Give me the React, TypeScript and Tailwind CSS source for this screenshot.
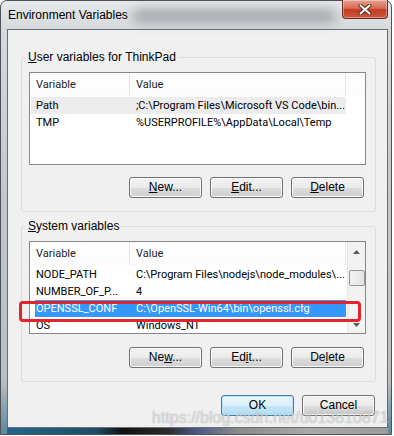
import React from 'react';

type Row = { name: string; value: string; state?: 'gray' | 'selected' };

const userRows: Row[] = [
  { name: 'Path', value: ';C:\\Program Files\\Microsoft VS Code\\bin...', state: 'gray' },
  { name: 'TMP', value: '%USERPROFILE%\\AppData\\Local\\Temp' },
];

const systemRows: Row[] = [
  { name: 'NODE_PATH', value: 'C:\\Program Files\\nodejs\\node_modules\\...' },
  { name: 'NUMBER_OF_P...', value: '4' },
  { name: 'OPENSSL_CONF', value: 'C:\\OpenSSL-Win64\\bin\\openssl.cfg', state: 'selected' },
  { name: 'OS', value: 'Windows_NT' },
];

function WinButton({ children, primary }: { children: React.ReactNode; primary?: boolean }) {
  return (
    <button
      type="button"
      className={
        primary
          ? 'h-[21px] w-[73px] rounded-[3px] border border-[#3c7fb1] bg-[linear-gradient(#eaf6fd_0%,#dcf0fb_50%,#c6e6f8_50%,#b4dcf3_100%)] text-[12px] leading-[15px] text-black shadow-[inset_0_0_0_1px_#b9e2f8]'
          : 'h-[21px] w-[73px] rounded-[3px] border border-[#707070] bg-[linear-gradient(#f2f2f2_0%,#ebebeb_50%,#dddddd_50%,#cfcfcf_100%)] text-[12px] leading-[15px] text-black shadow-[inset_0_0_0_1px_#fbfbfb]'
      }
    >
      {children}
    </button>
  );
}

function VarRow({ row }: { row: Row }) {
  if (row.state === 'selected') {
    return (
      <div className="flex h-[17px] items-center">
        <div className="ml-[5px] flex h-full w-[311px] items-center bg-[#3399ff] text-white">
          <span className="w-[95px] overflow-hidden whitespace-nowrap pl-[1px]">{row.name}</span>
          <span className="overflow-hidden whitespace-nowrap pl-[6px]">{row.value}</span>
        </div>
      </div>
    );
  }
  return (
    <div className="flex h-[17px] items-center">
      <div
        className={
          row.state === 'gray'
            ? 'ml-[1px] flex h-full w-[315px] items-center bg-[#ececec]'
            : 'ml-[1px] flex h-full w-[315px] items-center'
        }
      >
        <span className="w-[99px] overflow-hidden whitespace-nowrap pl-[5px]">{row.name}</span>
        <span className="overflow-hidden whitespace-nowrap pl-[6px]">{row.value}</span>
      </div>
    </div>
  );
}

function ScrollArrow({ down }: { down?: boolean }) {
  return (
    <svg width="7" height="4" viewBox="0 0 7 4" className={down ? 'rotate-180' : ''}>
      <path d="M0 4 L3.5 0 L7 4 Z" fill="#5a5a5a" />
    </svg>
  );
}

function VarList({ rows, scroll }: { rows: Row[]; scroll?: boolean }) {
  return (
    <div className="flex h-[93px] overflow-hidden border border-[#828790] bg-white font-['Roboto',Arial,sans-serif] text-[11px] leading-[14px]">
      <div className="flex min-w-0 flex-1 flex-col">
        <div className="flex h-[23px] shrink-0 bg-[linear-gradient(#ffffff,#fbfbfb)] text-[#1e1e1e]">
          <div className="w-[100px] border-r border-[#e3e5e8] pl-[6px] leading-[23px]">Variable</div>
          <div className="w-[216px] border-r border-[#e3e5e8] pl-[6px] leading-[23px]">Value</div>
          <div className="flex-1" />
        </div>
        <div className="pt-[1px]">
          {rows.map((r) => (
            <VarRow key={r.name} row={r} />
          ))}
        </div>
      </div>
      {scroll && (
        <div className="flex w-[18px] shrink-0 flex-col items-center border-l border-[#e6e6e6] bg-[#f2f2f2]">
          <div className="flex h-[19px] items-center justify-center">
            <ScrollArrow />
          </div>
          <div className="mt-[9px] h-[16px] w-[16px] rounded-[2px] border border-[#979797] bg-[linear-gradient(90deg,#f3f3f3,#e2e2e2)]" />
          <div className="flex-1" />
          <div className="flex h-[17px] items-center justify-center">
            <ScrollArrow down />
          </div>
        </div>
      )}
    </div>
  );
}

function Group({ label, children }: { label: React.ReactNode; children: React.ReactNode }) {
  return (
    <fieldset className="ml-[13px] mr-[11px] rounded-[3px] border border-[#d5dfe5] p-0">
      <legend className="ml-[4px] px-[2px] leading-[15px]">{label}</legend>
      <div className="pb-[13px] pl-[7px] pr-[9px] pt-[7px]">{children}</div>
    </fieldset>
  );
}

export default function App() {
  return (
    <div className="relative h-[436px] w-[394px] overflow-hidden bg-white font-['Liberation_Sans',Arial,sans-serif] text-[12px] leading-[15px] text-black">
      <div className="flex h-[435px] w-[392px] flex-col rounded-t-[7px] border border-[#4e5256] bg-[image:linear-gradient(180deg,#e6e9ec_0px,#d6dadd_28px,#c3c7cb_200px,#b9bec2_380px,#5f8aa0_430px)] pl-[6px] pr-[3px]">
        <div className="relative flex h-[28px] shrink-0 items-start justify-between">
          <div className="pointer-events-none absolute left-[125px] top-[8px] h-[14px] w-[205px] rounded-full bg-[#7d8186] opacity-60 blur-[6px]" />
          <span className="relative ml-[1px] mt-[7px] text-[12px] leading-[15px] text-black">Environment Variables</span>
          <div className="relative -mt-[1px] flex h-[19px] w-[46px] items-center justify-center rounded-b-[4px] border border-t-0 border-[#6b2a22] bg-[linear-gradient(#e7a28f_0%,#d76c55_45%,#c23c22_55%,#d0593e_100%)] shadow-[inset_0_0_0_1px_rgba(255,255,255,0.35)]">
            <svg width="14" height="11" viewBox="0 0 14 11">
              <path d="M2.5 1.5 L11.5 9.5 M11.5 1.5 L2.5 9.5" stroke="#5a1d14" strokeWidth="4" strokeLinecap="round" />
              <path d="M2.5 1.5 L11.5 9.5 M11.5 1.5 L2.5 9.5" stroke="#ffffff" strokeWidth="2.2" strokeLinecap="round" />
            </svg>
          </div>
        </div>

        <div className="flex flex-1 flex-col border border-[#6a6d70] bg-[#f0f0f0]">
          <div className="mt-[20px]">
            <Group
              label={
                <>
                  <span className="underline">U</span>ser variables for ThinkPad
                </>
              }
            >
              <VarList rows={userRows} />
              <div className="mt-[12px] flex justify-end gap-[8px] pr-[2px]">
                <WinButton>
                  <span className="underline">N</span>ew...
                </WinButton>
                <WinButton>
                  <span className="underline">E</span>dit...
                </WinButton>
                <WinButton>
                  <span className="underline">D</span>elete
                </WinButton>
              </div>
            </Group>
          </div>

          <div className="mt-[7px]">
            <Group
              label={
                <>
                  <span className="underline">S</span>ystem variables
                </>
              }
            >
              <VarList rows={systemRows} scroll />
              <div className="mt-[13px] flex justify-end gap-[8px] pr-[2px]">
                <WinButton>
                  Ne<span className="underline">w</span>...
                </WinButton>
                <WinButton>
                  Ed<span className="underline">i</span>t...
                </WinButton>
                <WinButton>
                  De<span className="underline">l</span>ete
                </WinButton>
              </div>
            </Group>
          </div>

          <div className="mt-[13px] flex justify-end gap-[8px] pr-[12px]">
            <WinButton primary>OK</WinButton>
            <WinButton>Cancel</WinButton>
          </div>
        </div>

        <div className="h-[6px] shrink-0 bg-[linear-gradient(90deg,#23678b_0px,#1d4d66_90px,#111111_115px,#2a2a2a_160px,#4a5a8a_190px,#8a8a8a_230px,#a9a9a9_300px,#9a9a9a_385px)]" />
      </div>

      <div className="pointer-events-none absolute left-[19px] top-[301px] h-[21px] w-[342px] rounded-[4px] border-[3px] border-[#e0262c]" />

      <div className="pointer-events-none absolute left-[152px] top-[408px] whitespace-nowrap text-[16px] leading-[20px] text-white/60 [text-shadow:0_0_1px_rgba(60,60,60,0.5)]">
        https://blog.csdn.net/u013810871
      </div>
    </div>
  );
}
